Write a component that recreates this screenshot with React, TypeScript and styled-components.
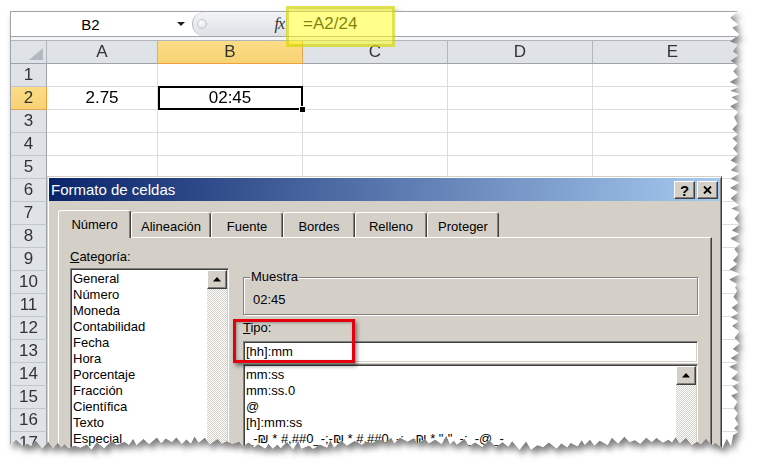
import React from "react";
import styled, { createGlobalStyle } from "styled-components";

const GlobalStyle = createGlobalStyle`
  html, body {
    margin: 0;
    padding: 0;
    background: #ffffff;
  }
  body {
    width: 757px;
    height: 467px;
    overflow: hidden;
    font-family: "Liberation Sans", Arial, sans-serif;
  }
`;

// torn paper edge (right + bottom) of the screenshot clipping
const SHEET_W = 731;
const SHEET_H = 441;

const noise = (i: number) => {
  const s = Math.sin(i * 78.233 + 1.7) * 43758.5453;
  return s - Math.floor(s);
};

const tornClip = (() => {
  const pts: string[] = ["0px 0px"];
  let y = 0;
  let i = 0;
  while (y < SHEET_H - 14) {
    const depth = i % 2 === 0 ? 1 + noise(i) * 3 : 6 + noise(i) * 6;
    pts.push(`${(SHEET_W - depth).toFixed(1)}px ${y.toFixed(1)}px`);
    y += 3 + noise(i + 50) * 4;
    i++;
  }
  let x = SHEET_W - 10;
  while (x > 0) {
    const wave = 3 * Math.sin(x / 37);
    const depth = i % 2 === 0 ? 2 + noise(i) * 3 : 6 + noise(i) * 6;
    pts.push(`${x.toFixed(1)}px ${(SHEET_H - depth - 3 + wave).toFixed(1)}px`);
    x -= 3 + noise(i + 90) * 5;
    i++;
  }
  pts.push(`0px ${SHEET_H - 6}px`);
  return `polygon(${pts.join(", ")})`;
})();

const Frame = styled.div`
  position: relative;
  width: 757px;
  height: 467px;
  box-sizing: border-box;
  padding: 11px 0 0 10px;
  filter: drop-shadow(3px 5px 3px rgba(0, 0, 0, 0.5));
`;

const Sheet = styled.div`
  position: relative;
  width: ${SHEET_W}px;
  height: ${SHEET_H}px;
  box-sizing: border-box;
  background: #ffffff;
  border-left: 1px solid #9ea4aa;
  overflow: hidden;
  clip-path: ${tornClip};
`;

/* ---------- formula bar ---------- */

const FormulaBar = styled.div`
  display: flex;
  height: 26px;
  box-sizing: border-box;
  border-top: 1px solid #a0a5ac;
  border-bottom: 1px solid #a0a5ac;
  background: #ffffff;
`;

const NameBox = styled.div`
  width: 159px;
  display: flex;
  align-items: center;
  justify-content: center;
  font-size: 15px;
  color: #000;
`;

const NameArrow = styled.div`
  width: 22px;
  display: flex;
  align-items: center;
  justify-content: center;
  &::before {
    content: "";
    border-left: 4px solid transparent;
    border-right: 4px solid transparent;
    border-top: 4px solid #222;
  }
`;

const FxPill = styled.div`
  width: 94px;
  display: flex;
  align-items: center;
  justify-content: space-between;
  box-sizing: border-box;
  padding: 0 2px 0 4px;
  border-radius: 12px 0 0 12px;
  border-left: 1px solid #b4b9c0;
  background: linear-gradient(#f3f4f6, #dde0e5);
`;

const PillKnob = styled.div`
  width: 10px;
  height: 10px;
  border-radius: 50%;
  border: 1px solid #c4c8ce;
  box-sizing: border-box;
  background: radial-gradient(circle at 40% 35%, #ffffff, #d5d9de);
`;

const Fx = styled.span`
  font-family: "Liberation Serif", "Times New Roman", serif;
  font-style: italic;
  font-size: 16px;
  color: #333;
  letter-spacing: -1px;
`;

const FormulaInput = styled.div`
  flex: 1;
  display: flex;
  align-items: center;
  padding-left: 16px;
  font-size: 17px;
  color: #000;
  border-left: 1px solid #c8ccd2;
`;

const BarGap = styled.div`
  height: 3px;
  background: #f4f5f7;
`;

/* ---------- grid ---------- */

const Grid = styled.div`
  display: grid;
  grid-template-columns: 36px 111px 145px 145px 145px 160px;
  grid-auto-rows: 23px;
  border-top: 1px solid #b1b6bd;
`;

const Corner = styled.div`
  display: flex;
  justify-content: flex-end;
  align-items: flex-end;
  box-sizing: border-box;
  padding: 0 3px 3px 0;
  background: #dfe3e8;
  border-right: 1px solid #b1b6bd;
  border-bottom: 1px solid #9da3aa;
`;

const ColHead = styled.div<{ $selected?: boolean }>`
  display: flex;
  align-items: center;
  justify-content: center;
  box-sizing: border-box;
  font-size: 17px;
  color: #333;
  background: ${(p) => (p.$selected ? "linear-gradient(#fbdc86, #f8d274)" : "#dfe3e8")};
  border-right: 1px solid ${(p) => (p.$selected ? "#e3a752" : "#b1b6bd")};
  border-bottom: 1px solid ${(p) => (p.$selected ? "#f0a03c" : "#9da3aa")};
`;

const RowHead = styled.div<{ $selected?: boolean }>`
  display: flex;
  align-items: center;
  justify-content: center;
  box-sizing: border-box;
  font-size: 17px;
  color: #333;
  background: ${(p) => (p.$selected ? "linear-gradient(#fbdc86, #f8d274)" : "#dfe3e8")};
  border-right: 1px solid ${(p) => (p.$selected ? "#f0a03c" : "#9da3aa")};
  border-bottom: 1px solid ${(p) => (p.$selected ? "#e3a752" : "#c2c7cd")};
`;

const Cell = styled.div<{ $active?: boolean }>`
  position: relative;
  display: flex;
  align-items: center;
  justify-content: center;
  box-sizing: border-box;
  font-size: 17px;
  color: #000;
  border-right: 1px solid #dadcdd;
  border-bottom: 1px solid #dadcdd;
  z-index: ${(p) => (p.$active ? 2 : 0)};
  &::before {
    content: ${(p) => (p.$active ? '""' : "none")};
    position: absolute;
    inset: -1px -1px -1px 0;
    border: 2px solid #000;
  }
  &::after {
    content: ${(p) => (p.$active ? '""' : "none")};
    position: absolute;
    right: -4px;
    bottom: -4px;
    width: 5px;
    height: 5px;
    background: #000;
    border: 1px solid #fff;
  }
`;

/* ---------- overlays ---------- */

const Callout = styled.div`
  position: absolute;
  left: 286px;
  top: 6px;
  width: 109px;
  height: 41px;
  box-sizing: border-box;
  background: rgba(255, 255, 20, 0.5);
  border: 3px solid rgba(185, 185, 0, 0.4);
`;

const RedMark = styled.div`
  position: absolute;
  left: 222px;
  top: 308px;
  width: 122px;
  height: 44px;
  box-sizing: border-box;
  border: 3px solid #e3000f;
  box-shadow: 2px 3px 4px rgba(0, 0, 0, 0.45), inset 1px 1px 3px rgba(0, 0, 0, 0.3);
  z-index: 5;
`;

/* ---------- dialog ---------- */

const Dialog = styled.div`
  position: absolute;
  left: 36px;
  top: 165px;
  width: 675px;
  height: 300px;
  box-sizing: border-box;
  padding: 1px;
  background: #d4d0c8;
  border: 1px solid;
  border-color: #d4d0c8 #404040 #404040 #d4d0c8;
  box-shadow: inset 1px 1px #ffffff, inset -1px -1px #808080;
  font-family: "Liberation Sans", Arial, sans-serif;
  font-size: 13px;
  color: #000;
  z-index: 3;
`;

const TitleBar = styled.div`
  height: 23px;
  display: flex;
  align-items: center;
  padding: 0 2px;
  background: linear-gradient(to right, #0a246a, #a6caf0);
`;

const Title = styled.div`
  flex: 1;
  color: #ffffff;
  font-size: 15px;
`;

const CaptionButtons = styled.div`
  display: flex;
  gap: 2px;
`;

const RaisedButton = styled.div<{ $w?: number; $h?: number }>`
  width: ${(p) => p.$w ?? 21}px;
  height: ${(p) => p.$h ?? 18}px;
  box-sizing: border-box;
  display: flex;
  align-items: center;
  justify-content: center;
  background: #d4d0c8;
  border: 1px solid;
  border-color: #ffffff #404040 #404040 #ffffff;
  box-shadow: inset -1px -1px #808080;
`;

const HelpGlyph = styled.span`
  font-weight: bold;
  font-size: 15px;
  line-height: 1;
  margin-top: 1px;
`;

const Body = styled.div`
  padding: 9px 9px 0 9px;
`;

const TabStrip = styled.div`
  display: flex;
  align-items: flex-start;
  height: 27px;
`;

const Tab = styled.div<{ $active?: boolean; $w: number }>`
  position: relative;
  z-index: ${(p) => (p.$active ? 2 : 0)};
  width: ${(p) => p.$w}px;
  height: ${(p) => (p.$active ? 28 : 25)}px;
  margin-top: ${(p) => (p.$active ? 0 : 2)}px;
  box-sizing: border-box;
  display: flex;
  align-items: center;
  justify-content: center;
  padding-top: ${(p) => (p.$active ? 0 : 2)}px;
  background: #d4d0c8;
  border: 1px solid;
  border-bottom: none;
  border-color: #ffffff #404040 transparent #ffffff;
  border-radius: 3px 3px 0 0;
  box-shadow: inset -1px 0 #808080;
`;

const Panel = styled.div`
  position: relative;
  z-index: 1;
  width: 654px;
  height: 240px;
  box-sizing: border-box;
  display: flex;
  gap: 14px;
  padding: 11px 13px 0 11px;
  border: 1px solid;
  border-color: #ffffff #404040 #404040 #ffffff;
  box-shadow: inset -1px -1px #808080;
`;

const LeftCol = styled.div`
  width: 159px;
  display: flex;
  flex-direction: column;
`;

const RightCol = styled.div`
  flex: 1;
  display: flex;
  flex-direction: column;
  padding-top: 28px;
`;

const Label = styled.div<{ $gap?: number }>`
  line-height: 16px;
  margin-top: ${(p) => p.$gap ?? 0}px;
`;

const Sunken = styled.div`
  box-sizing: border-box;
  background: #ffffff;
  border: 1px solid;
  border-color: #808080 #ffffff #ffffff #808080;
  box-shadow: inset 1px 1px #404040, inset -1px -1px #d4d0c8;
  padding: 1px;
`;

const ListBox = styled(Sunken)<{ $h: number; $gap: number }>`
  display: flex;
  height: ${(p) => p.$h}px;
  margin-top: ${(p) => p.$gap}px;
`;

const Items = styled.div`
  flex: 1;
  padding: 1px 0 0 1px;
  overflow: hidden;
  white-space: nowrap;
`;

const Item = styled.div`
  line-height: 16px;
`;

const ScrollTrack = styled.div`
  width: 20px;
  display: flex;
  flex-direction: column;
  background-color: #ffffff;
  background-image: repeating-conic-gradient(#d4d0c8 0% 25%, #ffffff 0% 50%);
  background-size: 2px 2px;
`;

const Group = styled.div`
  border: 1px solid #808080;
  box-shadow: inset 1px 1px #ffffff, 1px 1px #ffffff;
  padding: 0 9px 6px 9px;
`;

const GroupLabel = styled.div`
  width: fit-content;
  margin: -9px 0 0 -3px;
  padding: 0 1px;
  line-height: 16px;
  background: #d4d0c8;
`;

const GroupValue = styled.div`
  margin-top: 7px;
  line-height: 16px;
`;

const TextInput = styled(Sunken)`
  height: 22px;
  margin-top: 5px;
  padding: 1px 2px;
  line-height: 18px;
`;

const UpArrow = () => (
  <svg width="8" height="5" viewBox="0 0 8 5">
    <polygon points="4,0 8,4.5 0,4.5" fill="#000" />
  </svg>
);

const CloseGlyph = () => (
  <svg width="9" height="8" viewBox="0 0 9 8">
    <path d="M1 0.5 L8 7.5 M8 0.5 L1 7.5" stroke="#000" strokeWidth="1.8" />
  </svg>
);

const cols = ["A", "B", "C", "D", "E"];
const rows = Array.from({ length: 17 }, (_, i) => i + 1);
const values: Record<string, string> = { A2: "2.75", B2: "02:45" };

const tabs: { label: string; w: number }[] = [
  { label: "Número", w: 73 },
  { label: "Alineación", w: 80 },
  { label: "Fuente", w: 72 },
  { label: "Bordes", w: 72 },
  { label: "Relleno", w: 72 },
  { label: "Proteger", w: 72 },
];

const categories = [
  "General",
  "Número",
  "Moneda",
  "Contabilidad",
  "Fecha",
  "Hora",
  "Porcentaje",
  "Fracción",
  "Científica",
  "Texto",
  "Especial",
  "Personalizada",
];

const formats = [
  "mm:ss",
  "mm:ss.0",
  "@",
  "[h]:mm:ss",
  '_-₪ * #,##0_-;-₪ * #,##0_-;_-₪ * "-"_-;_-@_-',
  "_-* #,##0_-;-* #,##0_-;_-* \"-\"_-;_-@_-",
];

export default function App() {
  return (
    <>
      <GlobalStyle />
      <Frame>
        <Sheet>
          <FormulaBar>
            <NameBox>B2</NameBox>
            <NameArrow />
            <FxPill>
              <PillKnob />
              <Fx>fx</Fx>
            </FxPill>
            <FormulaInput>=A2/24</FormulaInput>
          </FormulaBar>
          <BarGap />
          <Grid>
            <Corner>
              <svg width="14" height="12" viewBox="0 0 14 12">
                <polygon points="14,0 14,12 0,12" fill="#b4b9bf" />
              </svg>
            </Corner>
            {cols.map((c) => (
              <ColHead key={c} $selected={c === "B"}>
                {c}
              </ColHead>
            ))}
            {rows.map((r) => (
              <React.Fragment key={r}>
                <RowHead $selected={r === 2}>{r}</RowHead>
                {cols.map((c) => (
                  <Cell key={c} $active={c === "B" && r === 2}>
                    {values[`${c}${r}`]}
                  </Cell>
                ))}
              </React.Fragment>
            ))}
          </Grid>

          <Dialog>
            <TitleBar>
              <Title>Formato de celdas</Title>
              <CaptionButtons>
                <RaisedButton>
                  <HelpGlyph>?</HelpGlyph>
                </RaisedButton>
                <RaisedButton>
                  <CloseGlyph />
                </RaisedButton>
              </CaptionButtons>
            </TitleBar>
            <Body>
              <TabStrip>
                {tabs.map((t, i) => (
                  <Tab key={t.label} $w={t.w} $active={i === 0}>
                    {t.label}
                  </Tab>
                ))}
              </TabStrip>
              <Panel>
                <LeftCol>
                  <Label>
                    <u>C</u>ategoría:
                  </Label>
                  <ListBox $h={200} $gap={3}>
                    <Items>
                      {categories.map((c) => (
                        <Item key={c}>{c}</Item>
                      ))}
                    </Items>
                    <ScrollTrack>
                      <RaisedButton $w={20} $h={19}>
                        <UpArrow />
                      </RaisedButton>
                    </ScrollTrack>
                  </ListBox>
                </LeftCol>
                <RightCol>
                  <Group>
                    <GroupLabel>Muestra</GroupLabel>
                    <GroupValue>02:45</GroupValue>
                  </Group>
                  <Label $gap={5}>
                    <u>T</u>ipo:
                  </Label>
                  <TextInput>[hh]:mm</TextInput>
                  <ListBox $h={120} $gap={1}>
                    <Items>
                      {formats.map((f) => (
                        <Item key={f}>{f}</Item>
                      ))}
                    </Items>
                    <ScrollTrack>
                      <RaisedButton $w={20} $h={19}>
                        <UpArrow />
                      </RaisedButton>
                    </ScrollTrack>
                  </ListBox>
                </RightCol>
              </Panel>
            </Body>
          </Dialog>

          <RedMark />
        </Sheet>
        <Callout />
      </Frame>
    </>
  );
}
